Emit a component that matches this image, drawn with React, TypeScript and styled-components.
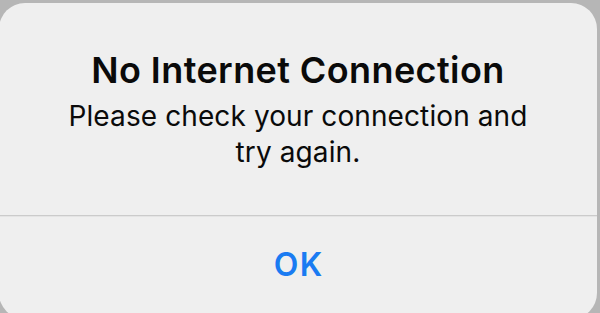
import React from "react";
import styled, { createGlobalStyle } from "styled-components";

const Global = createGlobalStyle`
  html, body { margin: 0; padding: 0; background: #b6b6b6; overflow: hidden; }
  body { width: 600px; height: 313px; font-family: Inter, "Noto Sans", sans-serif; }
`;

const Stage = styled.div`
  width: 600px;
  height: 313px;
  overflow: hidden;
  padding-top: 3px;
  box-sizing: border-box;
`;

const Alert = styled.div`
  margin-left: -1px;
  width: 598px;
  height: 316px;
  background: #efefef;
  border-radius: 26px;
  display: flex;
  flex-direction: column;
`;

const Content = styled.div`
  padding: 47px 20px 45px;
  display: flex;
  flex-direction: column;
  align-items: center;
  gap: 8px;
  text-align: center;
  color: #0a0a0a;
`;

const Title = styled.h1`
  margin: 0;
  font-size: 36px;
  line-height: 40px;
  font-weight: 600;
  letter-spacing: 0.4px;
  white-space: nowrap;
`;

const Message = styled.p`
  margin: 0;
  font-size: 28px;
  line-height: 36px;
  font-weight: 400;
  letter-spacing: 0.1px;
  white-space: nowrap;
`;

const Divider = styled.div`
  height: 1px;
  background: #cbcbcb;
  border-bottom: 1px solid #e4e4e4;
`;

const Action = styled.button`
  border: none;
  background: transparent;
  padding: 28px 0 0;
  font-family: Inter, "Noto Sans", sans-serif;
  font-size: 32px;
  line-height: 40px;
  font-weight: 600;
  letter-spacing: 1.5px;
  text-indent: 1.5px;
  color: #1a7bf2;
  cursor: pointer;
`;

export default function App() {
  return (
    <Stage>
      <Global />
      <Alert>
        <Content>
          <Title>No Internet Connection</Title>
          <Message>
            Please check your connection and
            <br />
            try again.
          </Message>
        </Content>
        <Divider />
        <Action>OK</Action>
      </Alert>
    </Stage>
  );
}
